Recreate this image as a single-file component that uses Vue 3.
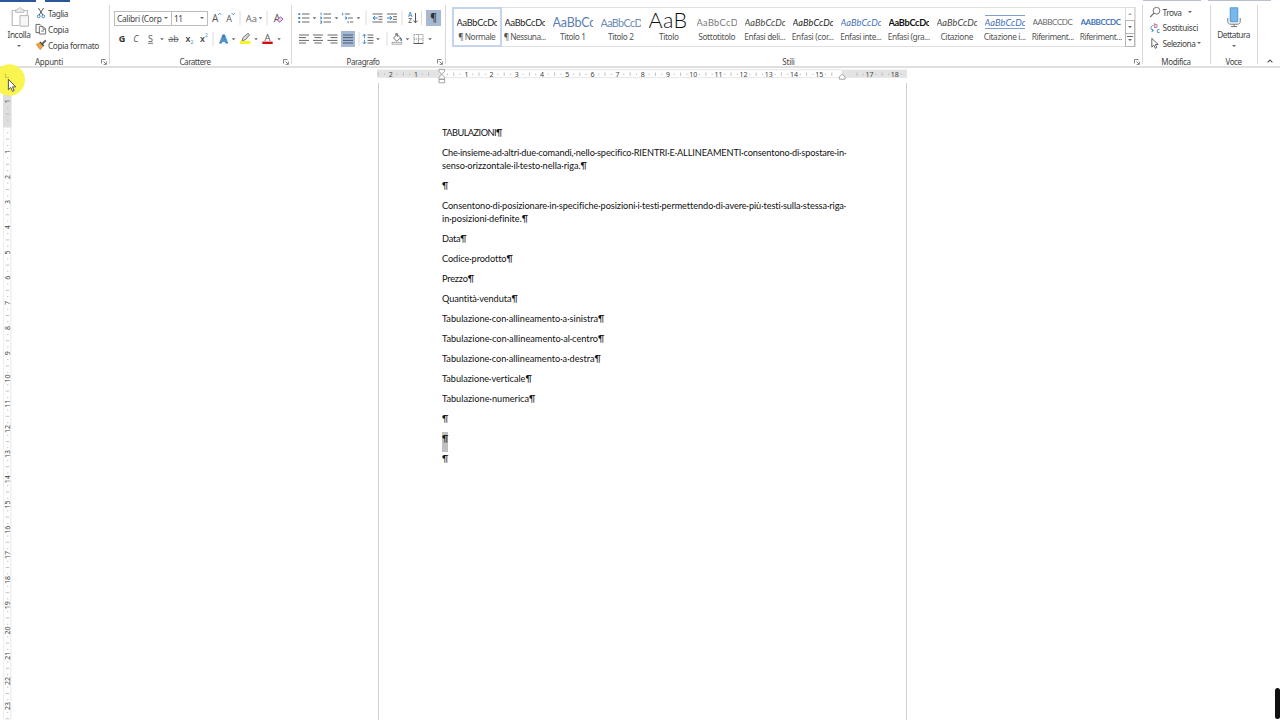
<template>
  <div class="word">
    <div class="tabs-edge">
      <i class="edge blue file"></i><i class="edge blue home"></i>
      <i class="edge grey share"></i><i class="edge grey comments"></i>
    </div>

    <header class="ribbon">
      <section class="group appunti">
        <div class="group-body clip">
          <div class="big-btn paste">
            <svg width="20" height="22" viewBox="0 0 20 22" v-html="icons.paste"></svg>
            <span v-fit="23">Incolla</span>
            <b class="caret"></b>
          </div>
          <ul class="clip-list">
            <li v-for="c in clipboard" :key="c.icon">
              <svg width="12" height="12" viewBox="-6 -6 12 12" v-html="icons[c.icon]"></svg>
              <span v-fit="c.w">{{ c.text }}</span>
            </li>
          </ul>
        </div>
        <footer><span v-fit="28">Appunti</span></footer>
        <svg class="launcher" width="6" height="6" viewBox="0 0 6 6" v-html="icons.launcher"></svg>
      </section>

      <section class="group carattere">
        <div class="group-body">
          <div class="tool-row">
            <div class="combo name"><span v-fit="44.5">Calibri (Corp</span><b class="caret"></b></div>
            <div class="combo size"><span v-fit="8.5">11</span><b class="caret"></b></div>
            <span v-for="(t, i) in fontRow" :key="i" class="tool" :style="{ width: t[1] + 'px' }">
              <svg height="16" :width="t[1]" :viewBox="box(t[1])" v-html="icons[t[0]]"></svg>
            </span>
          </div>
          <div class="tool-row">
            <span v-for="(t, i) in formatRow" :key="i" class="tool" :style="{ width: t[1] + 'px' }">
              <svg height="16" :width="t[1]" :viewBox="box(t[1])" v-html="icons[t[0]]"></svg>
            </span>
          </div>
        </div>
        <footer><span v-fit="31">Carattere</span></footer>
        <svg class="launcher" width="6" height="6" viewBox="0 0 6 6" v-html="icons.launcher"></svg>
      </section>

      <section class="group paragrafo">
        <div class="group-body">
          <div v-for="(row, r) in paraRows" :key="r" class="tool-row">
            <span v-for="(t, i) in row" :key="i" class="tool" :class="{ on: t[2] }" :style="{ width: t[1] + 'px' }">
              <svg height="16" :width="t[1]" :viewBox="box(t[1])" v-html="icons[t[0]]"></svg>
            </span>
          </div>
        </div>
        <footer><span v-fit="33">Paragrafo</span></footer>
        <svg class="launcher" width="6" height="6" viewBox="0 0 6 6" v-html="icons.launcher"></svg>
      </section>

      <section class="group stili">
        <div class="group-body">
          <div class="gallery">
            <div v-for="(s, i) in styles" :key="i" class="style-cell" :class="{ selected: i === 0 }">
              <div class="preview" :class="s.cls"><span v-fit="s.pw">{{ s.sample }}</span></div>
              <div class="style-name"><span v-fit="s.w">{{ s.name }}</span></div>
            </div>
            <div class="gallery-scroll">
              <span class="dim"><b class="caret up"></b></span>
              <span><b class="caret"></b></span>
              <span class="more"><b class="caret"></b></span>
            </div>
          </div>
        </div>
        <footer><span v-fit="12.5">Stili</span></footer>
        <svg class="launcher" width="6" height="6" viewBox="0 0 6 6" v-html="icons.launcher"></svg>
      </section>

      <section class="group modifica">
        <ul class="group-body edit-list">
          <li v-for="e in editing" :key="e.icon">
            <svg width="12" height="12" viewBox="-6 -6 12 12" v-html="icons[e.icon]"></svg>
            <span v-fit="e.w">{{ e.text }}</span>
            <b v-if="e.gap" class="caret" :style="{ marginLeft: e.gap + 'px' }"></b>
          </li>
        </ul>
        <footer><span v-fit="29.5">Modifica</span></footer>
      </section>

      <section class="group voce">
        <div class="group-body">
          <div class="big-btn dictate">
            <svg width="16" height="22" viewBox="0 0 16 22" v-html="icons.mic"></svg>
            <span v-fit="32.5">Dettatura</span>
            <b class="caret"></b>
          </div>
        </div>
        <footer><span v-fit="16">Voce</span></footer>
      </section>

      <div class="collapse">
        <svg width="6" height="4" viewBox="0 0 6 4"><path d="M.6 3.4 3 1l2.4 2.4" fill="none" stroke="#555" stroke-width="1.1" /></svg>
      </div>
    </header>

    <div class="workspace">
      <aside class="v-ruler">
        <svg width="12" height="652" viewBox="0 68 12 652">
          <rect x="3" y="68" width="8.5" height="652" fill="#f0f0f0" />
          <rect x="4.2" y="68" width="5.8" height="652" fill="#fff" />
          <rect x="3" y="90" width="8.5" height="37.5" fill="#dedede" />
          <template v-for="n in vMarks" :key="n">
            <text v-if="n % 4 === 0" class="ruler-no" :transform="`translate(10 ${vPos(n)}) rotate(-90)`">{{ Math.abs(n / 4) }}</text>
            <path v-else :d="n % 2 === 0 ? `M5.8 ${vPos(n)}h3.4` : `M7 ${vPos(n)}h1.4`" stroke="#bcbcbc" stroke-width=".9" />
          </template>
        </svg>
      </aside>

      <main class="canvas">
        <div class="h-ruler">
          <svg width="530" height="16" viewBox="377 68 530 16">
            <rect x="377" y="69.6" width="530" height="8.2" fill="#e3e3e3" />
            <rect x="442" y="70" width="400" height="7.4" fill="#fff" />
            <path d="M442 69.8H842M442 77.6H842" stroke="#e6e6e6" stroke-width=".8" />
            <template v-for="n in hMarks" :key="n">
              <text v-if="n % 4 === 0" class="ruler-no" :x="hPos(n)" y="77">{{ Math.abs(n / 4) }}</text>
              <path v-else :d="n % 2 === 0 ? `M${hPos(n)} 72.5v3.4` : `M${hPos(n)} 73.7v1.3`" stroke="#b8b8b8" stroke-width=".9" />
            </template>
            <path d="M439 69.4h5.6v2L441.8 74.4 439 71.4ZM439 79.2v-2L441.8 74.4l2.8 2.8v2ZM439 79.4h5.6v3.4H439Z" fill="#fff" stroke="#999" stroke-width=".9" />
            <path d="M839.4 79.2v-2.4L842.2 74l2.8 2.8v2.4Z" fill="#fff" stroke="#9a9a9a" stroke-width=".9" />
          </svg>
        </div>
        <article class="page">
          <p v-for="(p, i) in paragraphs" :key="i">
            <span v-for="(l, j) in p" :key="j" class="line">
              <span class="run" :class="{ marked: l.sel }"><span v-fit="l.w">{{ l.text }}</span></span>
            </span>
          </p>
        </article>
      </main>
    </div>

    <svg class="pointer" width="30" height="34" viewBox="-5 63 30 34">
      <circle cx="9.2" cy="80" r="15.8" fill="#faf450" />
      <path d="M5.5 73.5v4h3.6" fill="none" stroke="#d3ca3c" stroke-width="1.2" />
      <path d="M8.4 79.2v10.5l2.4-2.2 1.7 3.8 1.7-.8-1.7-3.6h3.2Z" fill="#fff" stroke="#444" stroke-width=".9" />
    </svg>
    <i class="edge-handle"></i>
  </div>
</template>

<script setup>
// stretches or tightens a run of text to the given width
const fit = (el, width) => {
  if (!width) return
  el.style.letterSpacing = '0px'
  const natural = el.getBoundingClientRect().width
  el.style.letterSpacing = (width - natural) / el.textContent.length + 'px'
}
const vFit = { mounted: (el, { value }) => fit(el, value) }

const box = w => `${-w / 2} -8 ${w} 16`

const clipboard = [
  { icon: 'cut', text: 'Taglia', w: 20 },
  { icon: 'copy', text: 'Copia', w: 20.5 },
  { icon: 'brush', text: 'Copia formato', w: 51 },
]

const editing = [
  { icon: 'find', text: 'Trova', w: 19, gap: 6.5 },
  { icon: 'replace', text: 'Sostituisci', w: 35.5 },
  { icon: 'select', text: 'Seleziona', w: 33, gap: 1.5 },
]

// [icon, cell width, pressed]
const fontRow = [
  ['grow', 16], ['shrink', 12], ['sep', 8], ['caseAa', 16], ['caret', 1], ['sep', 12], ['clear', 10],
]
const formatRow = [
  ['bold', 16], ['italic', 12], ['under', 18], ['caret', 4], ['strike', 19], ['sub', 12], ['sup', 17], ['sep', 2],
  ['effects', 19], ['caret', 1], ['mark', 22], ['caret', 0.1], ['fontColor', 23], ['caret', 0.1],
]
const paraRows = [
  [
    ['bullets', 16], ['caret', 5], ['numbers', 17], ['caret', 5], ['levels', 17], ['caret', 5], ['sep', 10],
    ['outdent', 13], ['indent', 16], ['sep', 4], ['sort', 17], ['sep', 1], ['blank', 4], ['pilcrow', 15, true],
  ],
  [
    ['left', 16], ['center', 12], ['right', 17], ['justify', 14, true], ['sep', 8], ['spacing', 10],
    ['caret', 10], ['sep', 8], ['bucket', 12], ['caret', 9], ['borders', 13], ['caret', 10],
  ],
]

const styles = [
  { name: '¶ Normale', w: 37, sample: 'AaBbCcDc', pw: 41.5 },
  { name: '¶ Nessuna...', w: 42, sample: 'AaBbCcDc', pw: 41.5 },
  { name: 'Titolo 1', w: 25.5, sample: 'AaBbCc', cls: 'h1', pw: 42.5 },
  { name: 'Titolo 2', w: 25.5, sample: 'AaBbCcD', cls: 'h2', pw: 41.5 },
  { name: 'Titolo', w: 19.5, sample: 'AaB', cls: 'title', pw: 39 },
  { name: 'Sottotitolo', w: 37, sample: 'AaBbCcD', cls: 'subtitle', pw: 41.5 },
  { name: 'Enfasi deli...', w: 41, sample: 'AaBbCcDc', cls: 'it soft', pw: 41.5 },
  { name: 'Enfasi (cor...', w: 42, sample: 'AaBbCcDc', cls: 'it', pw: 41.5 },
  { name: 'Enfasi inte...', w: 41, sample: 'AaBbCcDc', cls: 'it accent', pw: 41.5 },
  { name: 'Enfasi (gra...', w: 42, sample: 'AaBbCcDc', cls: 'strong', pw: 41.5 },
  { name: 'Citazione', w: 32.5, sample: 'AaBbCcDc', cls: 'it soft', pw: 41.5 },
  { name: 'Citazione i...', w: 42, sample: 'AaBbCcDc', cls: 'it accent lined', pw: 41.5 },
  { name: 'Riferiment...', w: 42, sample: 'AABBCCDC', cls: 'caps dark-grey', pw: 40 },
  { name: 'Riferiment...', w: 42, sample: 'AABBCCDC', cls: 'caps strong accent', pw: 40 },
]

const range = (from, to) => Array.from({ length: to - from + 1 }, (_, i) => from + i)
// marks are in quarters of a centimetre
const hMarks = range(-10, 73).filter(n => ![-1, 0, 63, 64, 65].includes(n))
const vMarks = range(-5, 94).filter(n => n !== 0)
const hPos = n => +(441.2 + n * 6.3).toFixed(2)
const vPos = n => +(126.5 + n * 6.3).toFixed(2)

const paragraphs = [
  [{ text: 'TABULAZIONI¶', w: 60 }],
  [
    { text: 'Che·insieme·ad·altri·due·comandi,·nello·specifico·RIENTRI·E·ALLINEAMENTI·consentono·di·spostare·in·', w: 404 },
    { text: 'senso·orizzontale·il·testo·nella·riga.¶', w: 145 },
  ],
  [{ text: '¶' }],
  [
    { text: 'Consentono·di·posizionare·in·specifiche·posizioni·i·testi·permettendo·di·avere·più·testi·sulla·stessa·riga·', w: 404 },
    { text: 'in·posizioni·definite.¶', w: 86 },
  ],
  [{ text: 'Data¶', w: 24.5 }],
  [{ text: 'Codice·prodotto¶', w: 70.5 }],
  [{ text: 'Prezzo¶', w: 32 }],
  [{ text: 'Quantità·venduta¶', w: 76 }],
  [{ text: 'Tabulazione·con·allineamento·a·sinistra¶', w: 162.5 }],
  [{ text: 'Tabulazione·con·allineamento·al·centro¶', w: 162.5 }],
  [{ text: 'Tabulazione·con·allineamento·a·destra¶', w: 159 }],
  [{ text: 'Tabulazione·verticale¶', w: 90 }],
  [{ text: 'Tabulazione·numerica¶', w: 93.5 }],
  [{ text: '¶' }],
  [{ text: '¶', sel: true }],
  [{ text: '¶' }],
]

const A = (size, attrs, ch) => `<text text-anchor="middle" font-family="Open Sans, sans-serif" font-size="${size}" ${attrs}>${ch}</text>`
const lines = (rows, color = '#666') =>
  rows.map(([x, y, w]) => `<path d="M${x} ${y}h${w}" stroke="${color}" stroke-width="1"/>`).join('')

const icons = {
  blank: '',
  sep: '<path d="M0-7V7" stroke="#dcdcdc" stroke-width="1"/>',
  caret: '<path d="M-1.8-.8h3.6L0 1.3Z" fill="#666"/>',
  launcher: '<path d="M.5 4.5v-4h4M2.5 2.5l2.7 2.7M5.4 2.6v2.8H2.6" fill="none" stroke="#777" stroke-width=".9"/>',
  paste: '<path d="M8 18.5H1.2v-15h4M13 3.5h3.3V8" fill="none" stroke="#bdbdbd" stroke-width="1.2"/><path d="M4.6 5.3V2.8h2C7 .2 10.6.2 11 2.8h2v2.5Z" fill="#eee" stroke="#bdbdbd"/><path d="M9 8.6h8.5v10.6H9Z" fill="#f7f7f7" stroke="#b5b5b5"/>',
  cut: '<path d="M-2.6-5 1.8 2M2.6-5-1.8 2" stroke="#555" stroke-width="1" fill="none"/><circle cx="-2.3" cy="3.3" r="1.4" fill="none" stroke="#3a87c8"/><circle cx="2.3" cy="3.3" r="1.4" fill="none" stroke="#3a87c8"/>',
  copy: '<path d="M-1 3.6h-4v-8.2h4l1.4 1.4" fill="#fff" stroke="#666"/><path d="M-1.6-2.4h3.8l2.4 2.4v5H-1.6ZM2-2.2V.2h2.4M0 2h3" fill="#fff" stroke="#666" stroke-width=".9"/>',
  brush: '<path d="M-4.8-.6-.6-2.6 2.4.6-.8 4.8Z" fill="#f0a24a" stroke="#d98431" stroke-width=".7"/><path d="M-1-3 2.8 1" stroke="#555" stroke-width="1.6"/><path d="M1.2-1.2 4.8-4.6" stroke="#555" stroke-width="1.8"/>',
  grow: A(10, 'x="-.8" y="4" fill="#555"', 'A') + '<path d="M2.2-3.2 3.7-4.8 5.2-3.2" fill="none" stroke="#3a87c8" stroke-width=".9"/>',
  shrink: A(9, 'x="-1" y="4" fill="#555"', 'A') + '<path d="M1.8-4.8 3.3-3.2 4.8-4.8" fill="none" stroke="#3a87c8" stroke-width=".9"/>',
  caseAa: A(9.5, 'x="-.5" y="3.6" fill="#666"', 'Aa'),
  clear: A(10.5, 'x="-1" y="3.8" fill="#555"', 'A') + '<path d="M-.8 2.2 2.4-1.2 5 1 1.8 4.2Z" fill="#ecd3ef" stroke="#9b4fa5" stroke-width=".9"/>',
  bold: A(9, 'y="3" font-weight="700" fill="#333"', 'G'),
  italic: A(9, 'y="3" font-style="italic" fill="#555"', 'C'),
  under: A(9, 'x="-.5" y="2.8" fill="#555"', 'S') + '<path d="M-3 4.3h5" stroke="#555" stroke-width=".8"/>',
  strike: A(8.5, 'y="3" fill="#666"', 'ab') + '<path d="M-5.3.4h10.6" stroke="#555" stroke-width=".9"/>',
  sub: A(9, 'x="-1" y="2.8" fill="#444" font-weight="600"', 'x') + A(5, 'x="3" y="5" fill="#3a87c8"', '2'),
  sup: A(9, 'x="-1" y="2.8" fill="#444" font-weight="600"', 'x') + A(5, 'x="3" y="-1.6" fill="#3a87c8"', '2'),
  effects: A(11.5, 'y="4.2" font-weight="600" fill="#cfe4f6" stroke="#2e7fc2" stroke-width="1"', 'A'),
  mark: '<path d="M-5.2 3.4H5.4" stroke="#f7f321" stroke-width="3"/><path d="M-3 1.4-1.8-1.6 3-5.6l1.6 1.4L.8.4l-2.2 1Z" fill="#ddd" stroke="#666" stroke-width=".9"/>',
  fontColor: A(9.5, 'y="1.6" fill="#555"', 'A') + '<path d="M-5.2 3.8H5.2" stroke="#d01010" stroke-width="2.4"/>',
  bullets: lines([[-2, -4, 7.5], [-2, 0, 7.5], [-2, 4, 7.5]]) + '<path d="M-5.6-4.8h1.8v1.8h-1.8ZM-5.6-.9h1.8V.9h-1.8ZM-5.6 3h1.8v1.8h-1.8Z" fill="#2e7fc2"/>',
  numbers: lines([[-2, -4, 7.5], [-2, 0, 7.5], [-2, 4, 7.5]]) + '<path d="M-4.4-5.4v2.6M-5.4-.9h1.4v1.6h-1.4M-5.4 3h1.4v2.2h-1.4" fill="none" stroke="#2e7fc2" stroke-width=".9"/>',
  levels: lines([[-2.6, -4, 5], [0.4, 0, 5], [2.4, 4, 3.4]]) + '<path d="M-4.8-5.2v2.6M-2.6-.9h1.6v1.8h-1.6M.6 3v2.4" fill="none" stroke="#2e7fc2" stroke-width=".9"/>',
  outdent: lines([[-5, -4, 10], [1, -1.3, 4], [1, 1.3, 4], [-5, 4, 10]]) + '<path d="M.2 0h-4.6M-2.4-2-4.4 0l2 2" fill="none" stroke="#2e7fc2"/>',
  indent: lines([[-5, -4, 10], [1, -1.3, 4], [1, 1.3, 4], [-5, 4, 10]]) + '<path d="M-5 0H-.2M-2.2-2-.2 0l-2 2" fill="none" stroke="#2e7fc2"/>',
  sort: A(6.4, 'x="-2.4" y="-.8" fill="#2e7fc2" font-weight="600"', 'A') + A(6.4, 'x="-2.4" y="5.4" fill="#555" font-weight="600"', 'Z') + '<path d="M3-5V4.8M.9 2.6 3 4.8l2.1-2.2" fill="none" stroke="#555"/>',
  pilcrow: A(10, 'y="3.2" fill="#333" font-weight="600"', '¶'),
  left: lines([[-5, -4, 10], [-5, -1.4, 7], [-5, 1.4, 10], [-5, 4, 7]]),
  center: lines([[-5, -4, 10], [-3.5, -1.4, 7], [-5, 1.4, 10], [-3.5, 4, 7]]),
  right: lines([[-5, -4, 10], [-2, -1.4, 7], [-5, 1.4, 10], [-2, 4, 7]]),
  justify: lines([[-5, -4, 10], [-5, -1.4, 10], [-5, 1.4, 10], [-5, 4, 10]], '#4f5d73'),
  spacing: lines([[-.5, -4, 6], [-.5, -1.4, 6], [-.5, 1.4, 6], [-.5, 4, 6]]) + '<path d="M-3.6-4.6v3.8M-5.2-3.2l1.6-1.6L-2-3.2M-3.6 4.6V.8M-5.2 3.2l1.6 1.6L-2 3.2" fill="none" stroke="#2e7fc2" stroke-width=".9"/>',
  bucket: '<path d="M-3.6-1 .2-4.6 3.4-1.2-.2 2.2ZM-1.2-3.6v-1.8h1.6v3" fill="#fff" stroke="#666" stroke-width=".9"/><path d="M3.4-1c1.2 1 1.2 1.8.6 3" fill="none" stroke="#2e5f92" stroke-width="1.3"/><path d="M-5 3.4H4.8v1.8H-5Z" fill="#fff" stroke="#888" stroke-width=".7"/>',
  borders: '<path d="M-4.5-4.5h9v9h-9ZM0-4.5v9M-4.5 0h9" fill="none" stroke="#888" stroke-width=".9" stroke-dasharray="1.2 .6"/><path d="M-4.8 4.5h9.6" stroke="#555"/>',
  find: '<circle cx="1.5" cy="-1.3" r="3.4" fill="none" stroke="#666" stroke-width=".9"/><path d="M-1 1.2-4.8 5" stroke="#666" stroke-width="1.1"/>',
  replace: A(6.5, 'x=".8" y=".2" fill="#b4508f" font-weight="600"', 'b') + A(6.5, 'x="3" y="5" fill="#2e7fc2" font-weight="600"', 'c') + '<path d="M-1.6-2.6c-3 .4-3.4 4-.4 5.2M-2.8.9l1.3 1.8-2 1" fill="none" stroke="#2e7fc2" stroke-width=".9"/>',
  select: '<path d="M-3.2-4.6V4l2-1.8L.3 5.3l1.5-.8L.4 1.5h2.8Z" fill="#fff" stroke="#555" stroke-width=".9"/>',
  mic: '<path d="M4.2.8h7.6v14H4.2Z" fill="#78b7ec" stroke="#4b8dc8" stroke-width=".9"/><path d="M1.8 11v3.2c0 2 1 3 3 3h6.4c2 0 3-1 3-3V11M8 17.2v2.4M5 19.6h6" fill="none" stroke="#777" stroke-width="1"/>',
}
</script>

<style>
html,
body {
  margin: 0;
  height: 100%;
  background: #fff;
  overflow: hidden;
}
</style>

<style scoped>
.word {
  position: relative;
  width: 1280px;
  height: 720px;
  overflow: hidden;
  display: flex;
  flex-direction: column;
  background: #fff;
  font-family: "Noto Sans", "Open Sans", sans-serif;
  font-size: 8.3px;
  color: #444;
}
.word * { box-sizing: border-box; }
span { white-space: nowrap; }
svg { display: block; overflow: visible; flex: none; }
ul { margin: 0; padding: 0; list-style: none; }

.tabs-edge { display: flex; height: 2px; flex: none; }
.edge { height: 2px; flex: none; }
.edge.blue { background: #2b579a; }
.edge.grey { height: 1px; background: #b9bfcc; }
.file { width: 36px; }
.home { width: 25px; margin-left: 9px; }
.share { width: 58px; margin-left: 1073px; }
.comments { width: 63px; margin-left: 7px; }

.ribbon {
  display: flex;
  flex: none;
  height: 66px;
  border-bottom: 2px solid #dfdfdf;
}
.group {
  position: relative;
  flex: none;
  display: flex;
  flex-direction: column;
}
.group::after {
  content: "";
  position: absolute;
  right: 0;
  top: 3px;
  width: 1px;
  height: 59px;
  background: #d9d9d9;
}
.group-body { height: 53px; }
.group footer {
  height: 11px;
  line-height: 13px;
  font-size: 8px;
  display: flex;
  justify-content: center;
}
.launcher { position: absolute; right: 3px; bottom: 1px; }

.appunti { width: 110px; }
.carattere { width: 182px; }
.paragrafo { width: 154px; }
.stili { width: 697px; }
.appunti footer,
.carattere footer,
.paragrafo footer,
.stili footer { padding-right: 12px; }
.modifica { width: 68px; }
.voce { width: 47px; }
.modifica footer,
.voce footer { padding-right: 2px; }

.caret {
  width: 0;
  height: 0;
  flex: none;
  border: 2px solid transparent;
  border-top: 2px solid #666;
  border-bottom: 0;
}
.caret.up { border-top: 0; border-bottom: 2px solid #aaa; }

.clip { display: flex; }
.big-btn { display: flex; flex-direction: column; align-items: center; line-height: 12px; }
.big-btn .caret { margin-top: 4px; }
.paste { width: 38px; padding-top: 5px; }
.paste svg { margin-left: 4px; }
.dictate { padding: 5px 2px 0 0; }
.clip-list { padding-top: 3px; margin-left: -3px; }
.clip-list li,
.edit-list li {
  height: 16px;
  display: flex;
  align-items: center;
}
.clip-list li span { margin-left: 1px; }
.edit-list { padding: 2.5px 0 0 6px; }
.edit-list li { height: 15.5px; }
.edit-list li span { margin-left: 1.5px; }

.tool-row { display: flex; align-items: center; height: 21px; padding-left: 4px; }
.group-body > .tool-row:first-child { margin-top: 5.5px; }
.tool { height: 16px; flex: none; }
.tool.on { background: #a5b9d4; }
.combo {
  height: 15px;
  border: 1px solid #bcbcbc;
  display: flex;
  align-items: center;
  justify-content: space-between;
  padding: 0 3px 0 2px;
}
.combo.name { width: 58px; }
.combo.size { width: 37px; margin-left: -1px; }

.gallery {
  display: flex;
  width: 684px;
  height: 40px;
  margin: 5px 0 0 6px;
  border: 1px solid #e0e0e0;
}
.style-cell { width: 48px; height: 38px; padding: 4.5px 4px 0 3.5px; }
.style-cell.selected { outline: 2px solid #c3d4ec; outline-offset: -1px; }
.preview {
  width: 40px;
  height: 18.5px;
  overflow: hidden;
  line-height: 19px;
  font-family: Lato, sans-serif;
  font-size: 9.2px;
  color: #222;
}
.style-name { display: flex; justify-content: center; height: 13px; line-height: 12px; margin: 0 -3px; color: #555; }
.h1 { font-size: 12.5px; color: #5c80b0; }
.h2 { font-size: 10.8px; color: #6e8db8; }
.title { font-size: 21.5px; font-weight: 300; line-height: 15px; color: #111; }
.subtitle { color: #777; }
.it { font-style: italic; }
.soft { color: #444; }
.dark-grey { color: #666; }
.strong { font-weight: 700; color: #111; }
.accent { color: #4472b8; }
.caps { font-size: 8px; }
.lined {
  height: 14px;
  line-height: 13px;
  margin: 2px 0 2.5px;
  border-top: 1px solid #7f9fce;
  border-bottom: 1px solid #7f9fce;
}
.gallery-scroll { width: 10px; display: flex; flex-direction: column; margin: -1px -1px -1px 0; }
.gallery-scroll span {
  flex: 1;
  display: flex;
  align-items: center;
  justify-content: center;
  border: 1px solid #b5b5b5;
  margin-bottom: -1px;
}
.gallery-scroll span.dim { border-color: #dcdcdc; }
.gallery-scroll span.more { margin-bottom: 0; }
.more .caret { position: relative; }
.more .caret::before {
  content: "";
  position: absolute;
  left: -3px;
  top: -5px;
  width: 6px;
  height: 1px;
  background: #666;
}

.collapse { flex: 1; display: flex; align-items: flex-end; justify-content: center; padding: 0 0 3px 2px; }

.workspace { flex: 1; display: flex; min-height: 0; }
.v-ruler { width: 12px; flex: none; }
.ruler-no {
  font: 7px "Noto Sans", sans-serif;
  fill: #444;
  text-anchor: middle;
}
.canvas { flex: 1; padding-left: 365px; display: flex; flex-direction: column; }
.h-ruler { height: 15px; flex: none; }
.page {
  width: 529px;
  margin-left: 1px;
  flex: 1;
  padding: 43.1px 0 0 63px;
  border: solid #cfcfcf;
  border-width: 0 1px;
  font-family: Lato, sans-serif;
  font-size: 9.2px;
  color: #111;
}
.page p { margin: 0 0 6.97px; }
.line { display: block; height: 13px; line-height: 13px; }
.run { display: inline-block; }
.marked { background: #c0c0c0; height: 20px; width: 6px; }

.pointer { position: absolute; left: -5px; top: 63px; }
.edge-handle {
  position: absolute;
  right: 0;
  top: 688px;
  width: 5px;
  height: 31px;
  border-radius: 3px;
  background: #111;
}
</style>
